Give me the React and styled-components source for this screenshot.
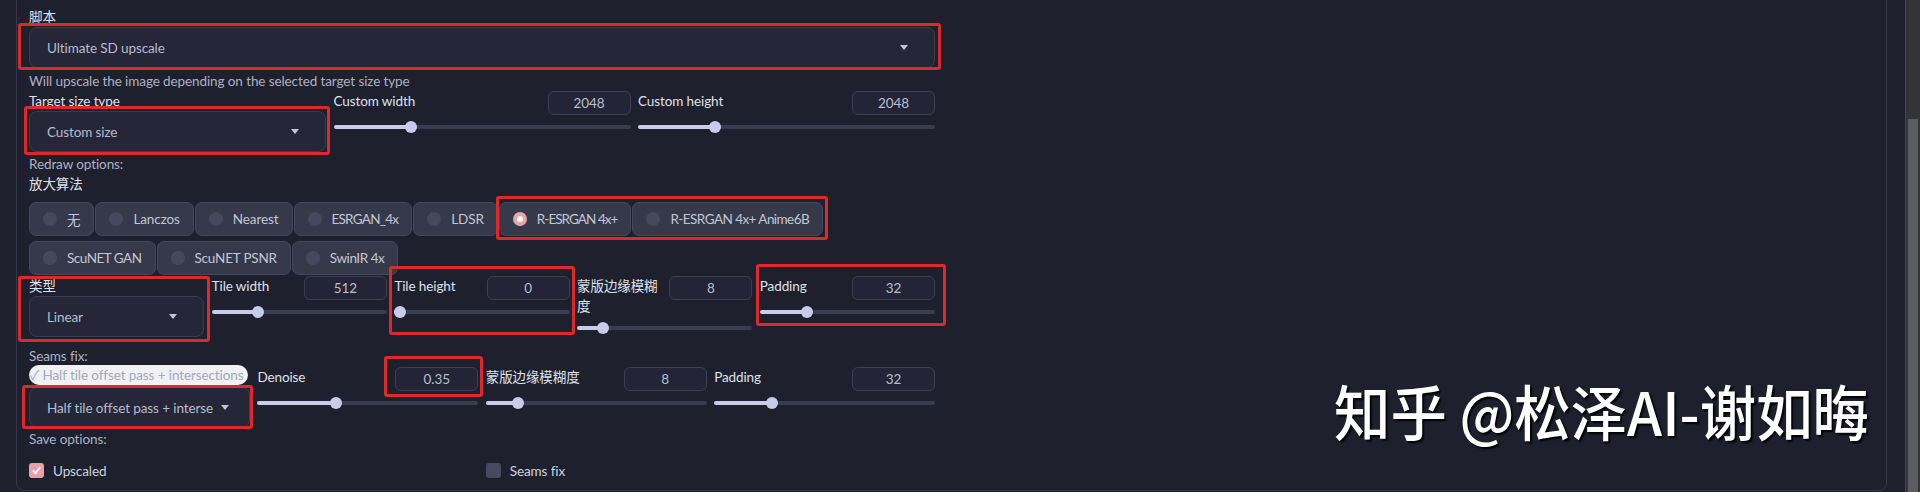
import styled, { createGlobalStyle } from "styled-components";

const GlobalStyle = createGlobalStyle`
  html, body {
    margin: 0;
    padding: 0;
    background: #1f202e;
    overflow: hidden;
  }
  body {
    font-family: Lato, "Noto Sans CJK SC", sans-serif;
    font-size: 13.5px;
    letter-spacing: -0.1px;
    color: #dcdee8;
  }
  * {
    box-sizing: border-box;
  }
`;

const Page = styled.div`
  display: flex;
  width: 1920px;
  height: 492px;
`;

const Main = styled.div`
  position: relative;
  flex: 1;
`;

const Panel = styled.div`
  margin-left: 16px;
  width: 1871px;
  height: 491px;
  border: 1px solid #34364a;
  border-top: none;
  border-radius: 0 0 8px 8px;
  padding-left: 12px;
`;

const Form = styled.div`
  width: 906px;
  display: flex;
  flex-direction: column;
`;

const Label = styled.div`
  line-height: 20px;
  color: ${(p) => (p.$muted ? "#adb1c3" : "#dfe1ea")};
  margin-top: ${(p) => p.$mt || 0}px;
  white-space: ${(p) => (p.$wrap ? "normal" : "nowrap")};
`;

const Marked = styled.div`
  position: relative;
  display: ${(p) => (p.$inline ? "flex" : "block")};
  gap: 1px;
  &::after {
    content: "";
    position: absolute;
    top: ${(p) => p.$t}px;
    right: ${(p) => p.$r}px;
    bottom: ${(p) => p.$b}px;
    left: ${(p) => p.$l}px;
    border: 3px solid #dc2a2c;
    border-radius: 3px;
    pointer-events: none;
  }
`;

const Select = styled.div`
  height: 41px;
  display: flex;
  align-items: center;
  gap: 8px;
  padding: 0 26px 0 17px;
  background: #252738;
  border: 1px solid #3a3c51;
  border-radius: 8px;
  color: #b8bccd;
  white-space: nowrap;
  margin-top: ${(p) => p.$mt || 0}px;
`;

const SelectText = styled.span`
  flex: ${(p) => (p.$fill ? 1 : "none")};
  overflow: hidden;
`;

const Caret = styled.span`
  flex: none;
  width: 0;
  height: 0;
  border-left: 4px solid transparent;
  border-right: 4px solid transparent;
  border-top: 5px solid #c2c5d6;
`;

const Row = styled.div`
  display: grid;
  grid-template-columns: repeat(${(p) => p.$cols}, minmax(0, 1fr));
  column-gap: 7.5px;
  align-items: start;
  margin-top: ${(p) => p.$mt || 0}px;
`;

const Field = styled.div`
  display: flex;
  flex-direction: column;
  min-width: 0;
  margin-top: ${(p) => p.$mt || 0}px;
`;

const FieldHead = styled.div`
  display: flex;
  justify-content: space-between;
  align-items: flex-start;
  gap: 6px;
`;

const NumBox = styled.div`
  flex: none;
  width: 83px;
  height: 24px;
  border: 1px solid #3d4055;
  border-radius: 6px;
  background: #232536;
  color: #b9bdd0;
  text-align: center;
  line-height: 22px;
`;

const SliderBox = styled.div`
  height: 24px;
  display: flex;
  align-items: center;
`;

const Track = styled.div`
  position: relative;
  flex: 1;
  height: 4px;
  border-radius: 2px;
  background: #3a3c4f;
`;

const Fill = styled.div`
  position: absolute;
  left: 0;
  top: 0;
  bottom: 0;
  border-radius: 2px;
  background: #c8cbea;
`;

const Thumb = styled.div`
  position: absolute;
  top: 50%;
  width: 12px;
  height: 12px;
  margin-top: -6px;
  border-radius: 50%;
  background: #c8cbea;
`;

const RadioRow = styled.div`
  display: flex;
  gap: 1px;
  margin-top: ${(p) => p.$mt || 0}px;
`;

const RadioItem = styled.div`
  display: inline-flex;
  align-items: center;
  gap: 10px;
  height: 34px;
  padding: 0 13px;
  background: #363949;
  border: 1px solid #45485d;
  border-radius: 7px;
  color: #c3c6d6;
  white-space: nowrap;
  letter-spacing: ${(p) => p.$ls || -0.1}px;
`;

const Dot = styled.span`
  position: relative;
  flex: none;
  width: 14px;
  height: 14px;
  border-radius: 50%;
  background: ${(p) => (p.$on ? "#e9a4a7" : "#46495d")};
  &::after {
    content: "";
    display: ${(p) => (p.$on ? "block" : "none")};
    position: absolute;
    left: 4px;
    top: 4px;
    width: 6px;
    height: 6px;
    border-radius: 50%;
    background: #fff;
  }
`;

const Pill = styled.div`
  align-self: flex-start;
  height: 20px;
  line-height: 20px;
  margin-top: -1px;
  padding: 0 4px 0 1px;
  border-radius: 10px;
  background: #f1f1f4;
  color: #a4a8ba;
  white-space: nowrap;
`;

const Check = styled.div`
  display: flex;
  align-items: center;
  gap: 9px;
  height: 15px;
  color: #cfd2de;
`;

const Box = styled.span`
  flex: none;
  display: flex;
  align-items: center;
  justify-content: center;
  width: 15px;
  height: 15px;
  border-radius: 3px;
  background: ${(p) => (p.$on ? "#e8a1a9" : "#464a5f")};
`;

const ScrollTrack = styled.div`
  width: 15px;
  display: flex;
  flex-direction: column;
  padding-top: 119px;
  background: #333338;
  border-left: 1px solid #45454b;
`;

const ScrollThumb = styled.div`
  flex: 1;
  margin: 0 2px;
  background: #5b5b62;
`;

const Watermark = styled.div`
  position: absolute;
  left: 1334px;
  top: 380px;
  font-family: "Noto Sans CJK SC", sans-serif;
  font-size: 60px;
  font-weight: 500;
  line-height: 1;
  letter-spacing: 0;
  color: #fff;
  white-space: nowrap;
  text-shadow: 2px 2px 2px #000;
  transform: scaleX(0.94);
  transform-origin: left top;
`;

function Slider({ label, value, pct, wrap }) {
  return (
    <>
      <FieldHead>
        <Label $wrap={wrap}>{label}</Label>
        <NumBox>{value}</NumBox>
      </FieldHead>
      <SliderBox>
        <Track>
          <Fill style={{ width: `calc(${pct} * (100% - 12px) + 6px)` }} />
          <Thumb style={{ left: `calc(${pct} * (100% - 12px))` }} />
        </Track>
      </SliderBox>
    </>
  );
}

function Radio({ label, on, ls }) {
  return (
    <RadioItem $ls={ls}>
      <Dot $on={on} />
      {label}
    </RadioItem>
  );
}

export default function App() {
  return (
    <Page>
      <GlobalStyle />
      <Main>
        <Panel>
          <Form>
            <Label $mt={7}>脚本</Label>
            <Marked $t={-4} $r={-6} $b={-2} $l={-11}>
              <Select>
                <SelectText $fill>Ultimate SD upscale</SelectText>
                <Caret />
              </Select>
            </Marked>
            <Label $muted $mt={3}>
              Will upscale the image depending on the selected target size type
            </Label>

            <Row $cols={3}>
              <Field>
                <Label>Target size type</Label>
                <Marked $t={-5} $r={-4} $b={-3} $l={-5}>
                  <Select>
                    <SelectText $fill>Custom size</SelectText>
                    <Caret />
                  </Select>
                </Marked>
              </Field>
              <Field>
                <Slider label="Custom width" value="2048" pct={0.25} />
              </Field>
              <Field>
                <Slider label="Custom height" value="2048" pct={0.25} />
              </Field>
            </Row>

            <Label $muted $mt={2}>Redraw options:</Label>
            <Label>放大算法</Label>

            <RadioRow $mt={8}>
              <Radio label="无" />
              <Radio label="Lanczos" />
              <Radio label="Nearest" />
              <Radio label="ESRGAN_4x" ls={-0.75} />
              <Radio label="LDSR" />
              <Marked $inline $t={-6} $r={-5} $b={-4} $l={-3}>
                <Radio label="R-ESRGAN 4x+" ls={-0.95} on />
                <Radio label="R-ESRGAN 4x+ Anime6B" ls={-0.55} />
              </Marked>
            </RadioRow>
            <RadioRow $mt={5}>
              <Radio label="ScuNET GAN" ls={-0.5} />
              <Radio label="ScuNET PSNR" ls={-0.2} />
              <Radio label="SwinIR 4x" ls={-0.45} />
            </RadioRow>

            <Row $cols={5} $mt={1}>
              <Marked $t={0} $r={-6} $b={-5} $l={-11}>
                <Field>
                  <Label>类型</Label>
                  <Select>
                    <SelectText $fill>Linear</SelectText>
                    <Caret />
                  </Select>
                </Field>
              </Marked>
              <Field>
                <Slider label="Tile width" value="512" pct={0.25} />
              </Field>
              <Marked $t={-10} $r={-5} $b={-11} $l={-5}>
                <Field>
                  <Slider label="Tile height" value="0" pct={0} />
                </Field>
              </Marked>
              <Field>
                <Slider label="蒙版边缘模糊度" value="8" pct={0.125} wrap />
              </Field>
              <Marked $t={-12} $r={-11} $b={-2} $l={-4}>
                <Field>
                  <Slider label="Padding" value="32" pct={0.25} />
                </Field>
              </Marked>
            </Row>

            <Label $muted $mt={6}>Seams fix:</Label>
            <Row $cols={4}>
              <Field>
                <Pill>✓ Half tile offset pass + intersections</Pill>
                <Marked $t={0} $r={-3} $b={-1} $l={-7}>
                  <Select $mt={2}>
                    <SelectText>Half tile offset pass + interse</SelectText>
                    <Caret />
                  </Select>
                </Marked>
              </Field>
              <Field $mt={1}>
                <FieldHead>
                  <Label>Denoise</Label>
                  <Marked $t={-11} $r={-5} $b={-6} $l={-11}>
                    <NumBox>0.35</NumBox>
                  </Marked>
                </FieldHead>
                <SliderBox>
                  <Track>
                    <Fill style={{ width: "calc(0.35 * (100% - 12px) + 6px)" }} />
                    <Thumb style={{ left: "calc(0.35 * (100% - 12px))" }} />
                  </Track>
                </SliderBox>
              </Field>
              <Field $mt={1}>
                <Slider label="蒙版边缘模糊度" value="8" pct={0.125} />
              </Field>
              <Field $mt={1}>
                <Slider label="Padding" value="32" pct={0.25} />
              </Field>
            </Row>

            <Label $muted $mt={1}>Save options:</Label>
            <Row $cols={2} $mt={14}>
              <Check>
                <Box $on>
                  <svg width="11" height="11" viewBox="0 0 12 12">
                    <polyline
                      points="2.5,6.5 5,9 9.5,3"
                      fill="none"
                      stroke="#fff"
                      strokeWidth="2"
                      strokeLinecap="round"
                      strokeLinejoin="round"
                    />
                  </svg>
                </Box>
                Upscaled
              </Check>
              <Check>
                <Box />
                Seams fix
              </Check>
            </Row>
          </Form>
        </Panel>
        <Watermark>知乎 @松泽AI-谢如晦</Watermark>
      </Main>
      <ScrollTrack>
        <ScrollThumb />
      </ScrollTrack>
    </Page>
  );
}
